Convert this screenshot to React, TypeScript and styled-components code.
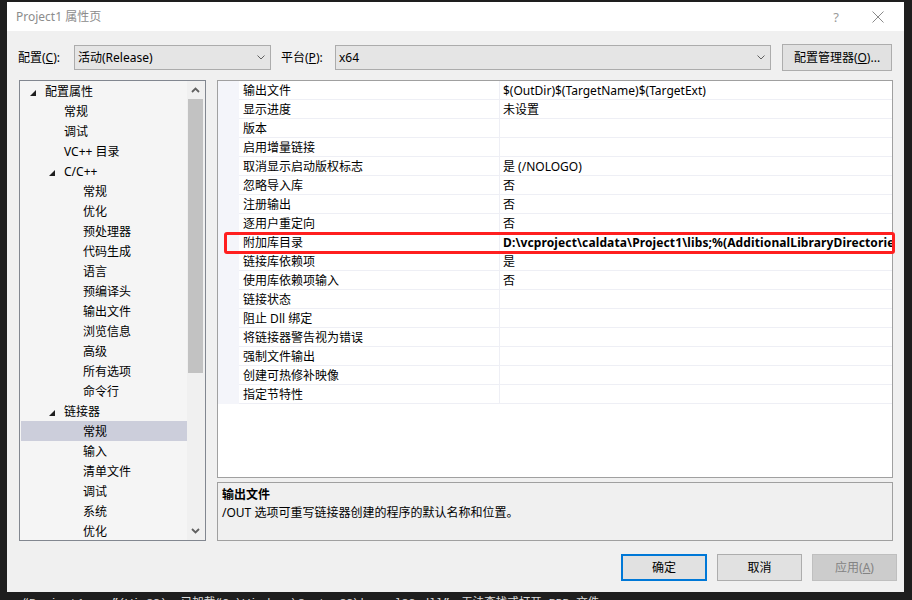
import React from "react";
import styled, { createGlobalStyle } from "styled-components";

const GlobalStyle = createGlobalStyle`
  html, body { margin: 0; padding: 0; background: #1e1e1e; }
  body {
    font-family: "Noto Sans", "Noto Sans CJK SC", sans-serif;
    font-size: 12px;
    color: #000;
  }
  * { box-sizing: border-box; }
`;

const Screen = styled.div`
  width: 912px;
  height: 600px;
  background: #1e1e1e;
  padding: 2px 8px 0 7px;
  display: flex;
  flex-direction: column;
  overflow: hidden;
`;

const Dialog = styled.div`
  height: 590px;
  flex: none;
  background: #f0f0f0;
  display: flex;
  flex-direction: column;
`;

const TitleBar = styled.div`
  height: 29px;
  flex: none;
  background: #ffffff;
  display: flex;
  align-items: center;
  padding-left: 9px;
`;

const TitleText = styled.div`
  flex: 1;
  color: #8c8c8c;
  font-size: 12px;
  line-height: 16px;
`;

const TitleHelp = styled.div`
  width: 20px;
  color: #9a9a9a;
  font-size: 13px;
  text-align: center;
  margin-right: 26px;
`;

const TitleClose = styled.div`
  width: 12px;
  height: 12px;
  margin-right: 20px;
  display: flex;
`;

const Toolbar = styled.div`
  margin-top: 13px;
  height: 27px;
  flex: none;
  display: flex;
  align-items: center;
  padding: 0 12px 0 11px;
`;

const FieldLabel = styled.div<{ $w: number; $gap?: number }>`
  width: ${(p) => p.$w}px;
  margin-left: ${(p) => p.$gap ?? 0}px;
  flex: none;
  line-height: 16px;
`;

const Combo = styled.div<{ $w: number }>`
  width: ${(p) => p.$w}px;
  flex: none;
  height: 25px;
  background: #e5e5e5;
  border: 1px solid #acacac;
  display: flex;
  align-items: center;
  padding: 0 0 0 3px;
  line-height: 16px;
`;

const ComboText = styled.div`
  flex: 1;
`;

const ComboArrow = styled.div`
  width: 16px;
  display: flex;
  justify-content: center;
  align-items: center;
  margin-right: 1px;
`;

const Spacer = styled.div`
  flex: 1;
`;

const Button = styled.div<{ $w: number; $primary?: boolean; $disabled?: boolean }>`
  width: ${(p) => p.$w}px;
  height: 27px;
  flex: none;
  display: flex;
  align-items: center;
  justify-content: center;
  background: ${(p) => (p.$disabled ? "#cccccc" : "#e1e1e1")};
  border: ${(p) =>
    p.$primary ? "2px solid #0078d7" : p.$disabled ? "1px solid #bfbfbf" : "1px solid #adadad"};
  color: ${(p) => (p.$disabled ? "#838383" : "#000")};
  line-height: 16px;
`;

const Main = styled.div`
  margin-top: 9px;
  height: 461px;
  flex: none;
  display: flex;
  gap: 11px;
  padding: 0 11px 0 12px;
`;

const Tree = styled.div`
  width: 187px;
  flex: none;
  border: 1px solid #828790;
  background: #f5f5f5;
  display: flex;
  overflow: hidden;
`;

const TreeList = styled.div`
  flex: 1;
  overflow: hidden;
  padding-left: 1px;
`;

const TreeRowBox = styled.div<{ $level: number; $selected?: boolean }>`
  height: 20px;
  display: flex;
  align-items: center;
  padding-left: ${(p) => 5 + p.$level * 19}px;
  padding-top: 1px;
  background: ${(p) => (p.$selected ? "#cccedb" : "transparent")};
  line-height: 16px;
  white-space: nowrap;
`;

const Expander = styled.div`
  width: 19px;
  height: 20px;
  flex: none;
  display: flex;
  align-items: center;
  padding: 2px 0 0 4px;
`;

const Scrollbar = styled.div`
  width: 18px;
  flex: none;
  display: flex;
  flex-direction: column;
  background: #f0f0f0;
  padding-right: 2px;
`;

const ScrollArrow = styled.div`
  height: 18px;
  flex: none;
  display: flex;
  align-items: center;
  justify-content: center;
`;

const ScrollTrack = styled.div`
  flex: 1;
  display: flex;
  flex-direction: column;
`;

const ScrollThumb = styled.div`
  height: 274px;
  margin: 0 0 0 1px;
  background: #c2c2c2;
`;

const RightCol = styled.div`
  flex: 1;
  display: flex;
  flex-direction: column;
  gap: 4px;
`;

const Grid = styled.div`
  position: relative;
  height: 398px;
  flex: none;
  border: 1px solid #a0a0a0;
  background: #ffffff;
`;

const PropRow = styled.div`
  display: grid;
  grid-template-columns: 21px 261px 1fr;
  height: 19px;
`;

const Gutter = styled.div`
  background: #f4f5fa;
  border-bottom: 1px solid #f4f5fa;
`;

const Cell = styled.div<{ $name?: boolean; $bold?: boolean }>`
  border-bottom: 1px solid #eeeff5;
  border-right: ${(p) => (p.$name ? "1px solid #eeeff5" : "none")};
  padding-left: ${(p) => (p.$name ? 4 : 3)}px;
  padding-top: 2px;
  line-height: 16px;
  white-space: nowrap;
  overflow: hidden;
  font-weight: ${(p) => (p.$bold ? 700 : 400)};
  letter-spacing: ${(p) => (p.$bold ? "0.12px" : "0")};
`;

const Highlight = styled.div`
  position: absolute;
  left: 6px;
  top: 151px;
  width: 671px;
  height: 22px;
  border: 3px solid #ff1f1f;
  border-radius: 3px;
  pointer-events: none;
`;

const Description = styled.div`
  height: 59px;
  flex: none;
  border: 1px solid #a0a0a0;
  background: #f0f0f0;
  padding: 3px 4px;
  line-height: 18px;
`;

const DescTitle = styled.div`
  font-weight: 700;
`;

const Footer = styled.div`
  margin-top: 13px;
  display: flex;
  justify-content: flex-end;
  gap: 10px;
  padding-right: 7px;
`;

const BottomStrip = styled.div`
  height: 8px;
  flex: none;
  overflow: hidden;
  padding-left: 15px;
  color: #dcdcdc;
  font-family: "Liberation Mono", "Noto Sans CJK SC", monospace;
  font-size: 11.5px;
  line-height: 16px;
  white-space: nowrap;
`;

const StripText = styled.div`
  margin-top: 3px;
`;

const Triangle = () => (
  <svg width="6" height="6" viewBox="0 0 6 6">
    <polygon points="6,0 6,6 0,6" fill="#1e1e1e" />
  </svg>
);

const Chevron = ({ up }: { up?: boolean }) => (
  <svg width="9" height="6" viewBox="0 0 9 6">
    <polyline
      points={up ? "1,5 4.5,1.5 8,5" : "1,1 4.5,4.5 8,1"}
      fill="none"
      stroke="#606060"
      strokeWidth="1.8"
    />
  </svg>
);

const ComboChevron = () => (
  <svg width="8" height="5" viewBox="0 0 8 5">
    <polyline points="0.5,0.5 4,4 7.5,0.5" fill="none" stroke="#606060" strokeWidth="1" />
  </svg>
);

const CloseIcon = () => (
  <svg width="12" height="12" viewBox="0 0 12 12">
    <line x1="0.5" y1="0.5" x2="11.5" y2="11.5" stroke="#8a8a8a" strokeWidth="1" />
    <line x1="11.5" y1="0.5" x2="0.5" y2="11.5" stroke="#8a8a8a" strokeWidth="1" />
  </svg>
);

type TreeItem = { label: string; level: number; expanded?: boolean; selected?: boolean };

const treeItems: TreeItem[] = [
  { label: "配置属性", level: 0, expanded: true },
  { label: "常规", level: 1 },
  { label: "调试", level: 1 },
  { label: "VC++ 目录", level: 1 },
  { label: "C/C++", level: 1, expanded: true },
  { label: "常规", level: 2 },
  { label: "优化", level: 2 },
  { label: "预处理器", level: 2 },
  { label: "代码生成", level: 2 },
  { label: "语言", level: 2 },
  { label: "预编译头", level: 2 },
  { label: "输出文件", level: 2 },
  { label: "浏览信息", level: 2 },
  { label: "高级", level: 2 },
  { label: "所有选项", level: 2 },
  { label: "命令行", level: 2 },
  { label: "链接器", level: 1, expanded: true },
  { label: "常规", level: 2, selected: true },
  { label: "输入", level: 2 },
  { label: "清单文件", level: 2 },
  { label: "调试", level: 2 },
  { label: "系统", level: 2 },
  { label: "优化", level: 2 },
];

type Prop = { name: string; value: string; bold?: boolean };

const props: Prop[] = [
  { name: "输出文件", value: "$(OutDir)$(TargetName)$(TargetExt)" },
  { name: "显示进度", value: "未设置" },
  { name: "版本", value: "" },
  { name: "启用增量链接", value: "" },
  { name: "取消显示启动版权标志", value: "是 (/NOLOGO)" },
  { name: "忽略导入库", value: "否" },
  { name: "注册输出", value: "否" },
  { name: "逐用户重定向", value: "否" },
  {
    name: "附加库目录",
    value: "D:\\vcproject\\caldata\\Project1\\libs;%(AdditionalLibraryDirectories)",
    bold: true,
  },
  { name: "链接库依赖项", value: "是" },
  { name: "使用库依赖项输入", value: "否" },
  { name: "链接状态", value: "" },
  { name: "阻止 Dll 绑定", value: "" },
  { name: "将链接器警告视为错误", value: "" },
  { name: "强制文件输出", value: "" },
  { name: "创建可热修补映像", value: "" },
  { name: "指定节特性", value: "" },
];

export default function App() {
  return (
    <>
      <GlobalStyle />
      <Screen>
        <Dialog>
          <TitleBar>
            <TitleText>Project1 属性页</TitleText>
            <TitleHelp>?</TitleHelp>
            <TitleClose>
              <CloseIcon />
            </TitleClose>
          </TitleBar>

          <Toolbar>
            <FieldLabel $w={56}>
              配置(<u>C</u>):
            </FieldLabel>
            <Combo $w={197}>
              <ComboText>活动(Release)</ComboText>
              <ComboArrow>
                <ComboChevron />
              </ComboArrow>
            </Combo>
            <FieldLabel $w={54} $gap={10}>
              平台(<u>P</u>):
            </FieldLabel>
            <Combo $w={436}>
              <ComboText>x64</ComboText>
              <ComboArrow>
                <ComboChevron />
              </ComboArrow>
            </Combo>
            <Spacer />
            <Button $w={110}>
              配置管理器(<u>O</u>)...
            </Button>
          </Toolbar>

          <Main>
            <Tree>
              <TreeList>
                {treeItems.map((it, i) => (
                  <TreeRowBox key={i} $level={it.level} $selected={it.selected}>
                    <Expander>{it.expanded ? <Triangle /> : null}</Expander>
                    {it.label}
                  </TreeRowBox>
                ))}
              </TreeList>
              <Scrollbar>
                <ScrollArrow>
                  <Chevron up />
                </ScrollArrow>
                <ScrollTrack>
                  <ScrollThumb />
                </ScrollTrack>
                <ScrollArrow>
                  <Chevron />
                </ScrollArrow>
              </Scrollbar>
            </Tree>

            <RightCol>
              <Grid>
                {props.map((p, i) => (
                  <PropRow key={i}>
                    <Gutter />
                    <Cell $name>{p.name}</Cell>
                    <Cell $bold={p.bold}>{p.value}</Cell>
                  </PropRow>
                ))}
                <Highlight />
              </Grid>
              <Description>
                <DescTitle>输出文件</DescTitle>
                <div>/OUT 选项可重写链接器创建的程序的默认名称和位置。</div>
              </Description>
            </RightCol>
          </Main>

          <Footer>
            <Button $w={86} $primary>
              确定
            </Button>
            <Button $w={85}>取消</Button>
            <Button $w={85} $disabled>
              应用(<u>A</u>)
            </Button>
          </Footer>
        </Dialog>
        <BottomStrip>
          <StripText>
            “Project1.exe”(Win32): 已加载“C:\Windows\System32\kernel32.dll”。无法查找或打开 PDB 文件。
          </StripText>
        </BottomStrip>
      </Screen>
    </>
  );
}
